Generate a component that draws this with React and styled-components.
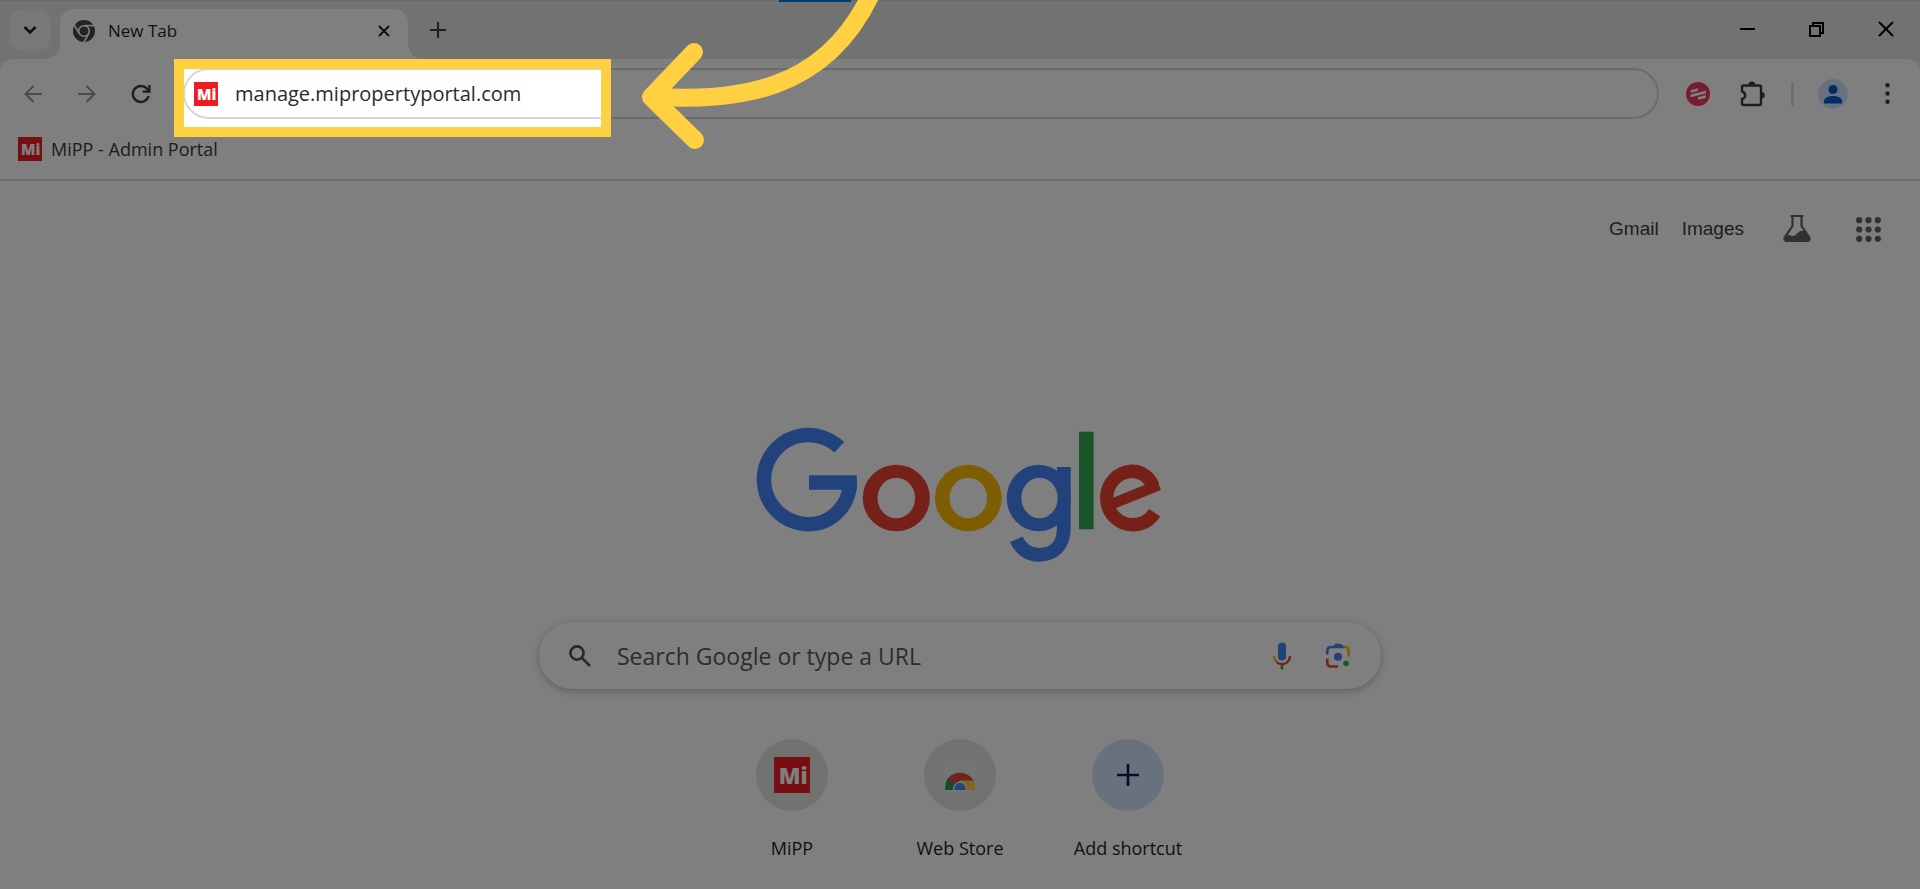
import React from 'react';
import styled, { createGlobalStyle } from 'styled-components';

const GlobalStyle = createGlobalStyle`
  * {
    box-sizing: border-box;
  }
  body {
    margin: 0;
    background: #fff;
    font-family: 'Open Sans', 'Noto Sans', sans-serif;
    color: #1f1f1f;
  }
  button {
    border: none;
    background: none;
    padding: 0;
    font: inherit;
    color: inherit;
    cursor: pointer;
  }
  svg {
    display: block;
  }
`

const Window = styled.div`
  position: relative;
  display: flex;
  flex-direction: column;
  min-height: 100vh;
  overflow: hidden;
`

const TabStrip = styled.div`
  display: flex;
  height: 59px;
  padding: 8px 0 0 9px;
  background: #e5e5e5;
  border-top: 1px solid #d4d4d4;
`

const TabSearch = styled.button`
  display: flex;
  align-items: center;
  justify-content: center;
  width: 42px;
  height: 42px;
  margin-right: 9px;
  border-radius: 14px;
  background: #f1f1f1;
`

const Tab = styled.div`
  position: relative;
  display: flex;
  align-items: center;
  width: 348px;
  height: 50px;
  padding: 0 14px 7px 13px;
  border-radius: 14px 14px 0 0;
  background: #fff;
  font-size: 17px;
  line-height: 24px;
  &::before,
  &::after {
    content: '';
    position: absolute;
    bottom: 0;
    width: 15px;
    height: 15px;
  }
  &::before {
    right: 100%;
    background: radial-gradient(circle at 0 0, transparent 15px, #fff 15px);
  }
  &::after {
    left: 100%;
    background: radial-gradient(circle at 100% 0, transparent 15px, #fff 15px);
  }
`

const TabTitle = styled.span`
  flex: 1;
  margin-left: 13px;
  font-weight: 500;
`

const TabButton = styled.button`
  display: flex;
  align-items: center;
  justify-content: center;
  width: 20px;
  height: 20px;
`

const NewTab = styled(TabButton)`
  width: 42px;
  height: 42px;
  margin-left: 9px;
`

const WindowControls = styled.div`
  display: flex;
  height: 40px;
  margin-left: auto;
`

const WindowButton = styled.button`
  display: flex;
  align-items: center;
  justify-content: center;
  width: 69px;
`

const TopMarker = styled.div`
  position: absolute;
  top: 0;
  left: 779px;
  width: 72px;
  height: 2px;
  background: #0078d4;
`

const ToolbarBack = styled.div`
  background: #e5e5e5;
`

const Toolbar = styled.div`
  display: flex;
  align-items: center;
  gap: 18px;
  padding: 9px 15px 0;
  border-radius: 13px 13px 0 0;
  background: #fff;
`

const ToolButton = styled.button`
  display: flex;
  align-items: center;
  justify-content: center;
  width: 36px;
  height: 36px;
`

const Omnibox = styled.div`
  position: relative;
  flex: 1;
  display: flex;
  align-items: center;
  height: 51px;
  margin: 0 3px 0 6px;
  padding: 0 9px;
  border: 2px solid #d6d7d9;
  border-radius: 26px;
`

const Address = styled.input`
  flex: 1;
  min-width: 0;
  height: 40px;
  margin-left: 17px;
  padding: 0;
  border: none;
  outline: none;
  background: none;
  font: 20px/28px 'Open Sans', 'Noto Sans', sans-serif;
  color: #2b2b2b;
`

const Separator = styled.span`
  width: 3px;
  height: 24px;
  margin: 0 3px;
  border-radius: 2px;
  background: #dcdcdc;
`

/* everything outside the frame is dimmed by its spread shadow */
const Spotlight = styled.div`
  position: absolute;
  z-index: 5;
  top: -11px;
  left: -11px;
  width: 437px;
  height: 78px;
  border: 10px solid #ffd042;
  box-shadow: 0 0 0 9999px rgba(0, 0, 0, 0.5);
  pointer-events: none;
`

const ArrowDrawing = styled.svg`
  position: absolute;
  z-index: 6;
  top: -70px;
  left: 455px;
  pointer-events: none;
`

const Bookmarks = styled.nav`
  display: flex;
  align-items: center;
  height: 62px;
  padding: 0 18px;
  border-bottom: 2px solid #dadada;
`

const Bookmark = styled.a`
  display: flex;
  align-items: center;
  gap: 9px;
  font-size: 18px;
  line-height: 24px;
  font-weight: 500;
  color: #3a3a3a;
  text-decoration: none;
`

const Page = styled.main`
  display: flex;
  flex-direction: column;
  align-items: center;
`

const PageNav = styled.nav`
  align-self: stretch;
  display: flex;
  align-items: center;
  justify-content: flex-end;
  height: 60px;
  margin-top: 18px;
  padding-right: 22px;
`

const NavLink = styled.a`
  margin-right: 23px;
  font: 19px/28px 'Liberation Sans', Arial, sans-serif;
  color: #3c3c3c;
  text-decoration: none;
`

const NavButton = styled.button`
  display: flex;
  align-items: center;
  justify-content: center;
  width: 60px;
  height: 60px;
  & + & {
    margin-left: 11px;
  }
`

const Logo = styled.svg`
  margin-top: 151px;
`

const SearchBox = styled.form`
  display: flex;
  align-items: center;
  width: 842px;
  max-width: 100%;
  height: 67px;
  margin-top: 42px;
  padding: 0 27px 0 30px;
  border-radius: 34px;
  background: #fff;
  box-shadow: 0 2px 9px rgba(32, 33, 36, 0.3);
`

const SearchInput = styled.input`
  flex: 1;
  min-width: 0;
  height: 48px;
  margin: 0 16px 0 26px;
  padding: 0;
  border: none;
  outline: none;
  background: none;
  font: 23px/32px 'Open Sans', 'Noto Sans', sans-serif;
  &::placeholder {
    color: #5a5a5a;
    opacity: 1;
  }
`

const SearchButton = styled.button`
  display: flex;
  align-items: center;
  justify-content: center;
  width: 32px;
  height: 32px;
  & + & {
    margin-left: 24px;
  }
`

const Shortcuts = styled.div`
  display: flex;
  margin-top: 50px;
`

const Shortcut = styled.a`
  display: flex;
  flex-direction: column;
  align-items: center;
  gap: 23px;
  width: 168px;
  font-size: 18px;
  line-height: 28px;
  color: #1f1f1f;
  text-decoration: none;
`

const Tile = styled.span`
  display: flex;
  align-items: center;
  justify-content: center;
  width: 72px;
  height: 72px;
  border-radius: 50%;
  background: ${props => props.$tint || '#e4e4e0'};
`

const MiIcon = ({ size }) => (
  <svg width={size} height={size} viewBox="0 0 24 24" aria-hidden="true">
    <rect width="24" height="24" fill="#ed1c24" />
    <text x="12.8" y="18" textAnchor="middle" fontFamily="Open Sans, sans-serif" fontWeight="800" fontSize="15" fill="#fff">Mi</text>
  </svg>
)

const ChromeIcon = () => (
  <svg width="22" height="22" viewBox="0 0 22 22" aria-hidden="true">
    <circle cx="11" cy="11" r="11" fill="#43474b" />
    <g stroke="#fff" strokeWidth="1.6" fill="none">
      <path d="M11 5.6H21" />
      <path d="M6.3 13.7L1.3 5" />
      <path d="M15.7 13.7L10.7 22.4" />
      <circle cx="11" cy="11" r="5.3" />
    </g>
  </svg>
)

const GoogleLogo = () => (
  <Logo width="440" height="170" viewBox="0 0 440 170" role="img" aria-label="Google">
    <g fill="none" stroke="#4285f4" strokeWidth="14.4">
      <path d="M99.3 37.3A44.6 44.6 0 1 0 69 114.2A40.8 42 0 0 0 109.8 72" />
      <path d="M69 72.5H116.8" />
    </g>
    <ellipse cx="156.3" cy="88" rx="33.6" ry="33.3" fill="#ea4335" />
    <ellipse cx="156.3" cy="88" rx="18.8" ry="20.3" fill="#fff" />
    <ellipse cx="228.3" cy="88" rx="33.4" ry="33.3" fill="#fbbc05" />
    <ellipse cx="228.3" cy="88" rx="18.8" ry="20.3" fill="#fff" />
    <ellipse cx="298.7" cy="88" rx="32" ry="33.3" fill="#4285f4" />
    <path d="M323.8 57V118C323.8 135 314 144.8 299 144.8C288 144.8 280 138 276.3 129.3" fill="none" stroke="#4285f4" strokeWidth="13.8" />
    <ellipse cx="299.5" cy="88" rx="18.2" ry="20.3" fill="#fff" />
    <rect x="339" y="21.7" width="14.6" height="97.6" fill="#34a853" />
    <g fill="none" stroke="#ea4335">
      <path d="M414.7 102.8C409.5 110.5 402.5 114.8 392.7 114.8A26 26.8 0 0 1 366.7 88A26 26.8 0 0 1 391.5 61.2C402 61.2 409.5 67.5 413 76" strokeWidth="13.4" />
      <path d="M372.5 93.7L419 75" strokeWidth="10.8" />
    </g>
  </Logo>
)

const Arrow = () => (
  <ArrowDrawing width="250" height="160" viewBox="640 0 250 160" aria-hidden="true">
    <g fill="none" stroke="#ffd042" strokeWidth="18" strokeLinecap="round" strokeLinejoin="round">
      <path d="M872 -8C825 94 735 101 652 97" />
      <path d="M694 52L651 97L695 140" />
    </g>
  </ArrowDrawing>
)

const App = () => (
  <Window>
    <GlobalStyle />
    <TabStrip>
      <TabSearch aria-label="Search tabs">
        <svg width="14" height="10" viewBox="0 0 14 10" fill="none" stroke="#1f1f1f" strokeWidth="2.6">
          <path d="M1.5 2L7 7.5L12.5 2" />
        </svg>
      </TabSearch>
      <Tab>
        <ChromeIcon />
        <TabTitle>New Tab</TabTitle>
        <TabButton aria-label="Close tab">
          <svg width="12" height="12" viewBox="0 0 12 12" stroke="#1f1f1f" strokeWidth="2">
            <path d="M1 1L11 11M11 1L1 11" />
          </svg>
        </TabButton>
      </Tab>
      <NewTab aria-label="New tab">
        <svg width="16" height="16" viewBox="0 0 16 16" stroke="#3c3c3c" strokeWidth="2">
          <path d="M8 0V16M0 8H16" />
        </svg>
      </NewTab>
      <WindowControls>
        <WindowButton aria-label="Minimize">
          <svg width="15" height="15" viewBox="0 0 15 15"><rect y="6" width="15" height="2" /></svg>
        </WindowButton>
        <WindowButton aria-label="Restore">
          <svg width="15" height="15" viewBox="0 0 15 15" fill="none" stroke="#000" strokeWidth="2">
            <path d="M1 4H11V14H1ZM4 4V1H14V11H11" />
          </svg>
        </WindowButton>
        <WindowButton aria-label="Close">
          <svg width="16" height="16" viewBox="0 0 16 16" stroke="#000" strokeWidth="2">
            <path d="M1 1L15 15M15 1L1 15" />
          </svg>
        </WindowButton>
      </WindowControls>
      <TopMarker />
    </TabStrip>

    <ToolbarBack>
      <Toolbar>
        <ToolButton aria-label="Back">
          <svg width="18" height="18" viewBox="0 0 18 18" fill="none" stroke="#949494" strokeWidth="2">
            <path d="M18 9H2M9.5 1L1.5 9L9.5 17" />
          </svg>
        </ToolButton>
        <ToolButton aria-label="Forward">
          <svg width="18" height="18" viewBox="0 0 18 18" fill="none" stroke="#949494" strokeWidth="2">
            <path d="M0 9H16M8.5 1L16.5 9L8.5 17" />
          </svg>
        </ToolButton>
        <ToolButton aria-label="Reload">
          <svg width="20" height="20" viewBox="0 0 20 20" fill="none" stroke="#3c3c3c" strokeWidth="2.4">
            <path d="M17.6 12A8 8 0 1 1 16 4.8L18 7" />
            <path d="M18.4 1V7.6H11.6" />
          </svg>
        </ToolButton>
        <Omnibox>
          <MiIcon size={24} />
          <Address type="text" aria-label="Address" defaultValue="manage.mipropertyportal.com" />
          <Spotlight />
          <Arrow />
        </Omnibox>
        <ToolButton aria-label="Recorder extension">
          <svg width="24" height="24" viewBox="0 0 24 24">
            <circle cx="12" cy="12" r="12" fill="#ee365f" />
            <g fill="#fff">
              <path d="M4.6 8.2L12 6.2V9L4.6 10.8Z" />
              <path d="M4.6 12.6L19.8 8.8V11.4L4.6 15.2Z" />
              <path d="M12 15L19.8 13.2V16L12 17.8Z" />
            </g>
          </svg>
        </ToolButton>
        <ToolButton aria-label="Extensions">
          <svg width="25" height="26" viewBox="0 0 25 26">
            <path d="M3.5 4.5H19.5Q21 4.5 21 6V22.5Q21 24 19.5 24H3.5Q2 24 2 22.5V18.2Q5.2 17 5.2 14.2Q5.2 11.5 2 10.3V6Q2 4.5 3.5 4.5Z" fill="none" stroke="#3c3c3c" strokeWidth="2.4" />
            <path d="M8.5 4A3.4 3.4 0 0 1 15.3 4ZM21.5 11A3.2 3.2 0 0 1 21.5 17.4Z" fill="#3c3c3c" />
          </svg>
        </ToolButton>
        <Separator />
        <ToolButton aria-label="Profile">
          <svg width="30" height="30" viewBox="0 0 30 30">
            <circle cx="15" cy="15" r="15" fill="#d3e3fd" />
            <circle cx="15" cy="10.5" r="4.6" fill="#0b57d0" />
            <path d="M6 24.5V21.8C6 18.6 11 17 15 17S24 18.6 24 21.8V24.5Z" fill="#0b57d0" />
          </svg>
        </ToolButton>
        <ToolButton aria-label="Menu">
          <svg width="5" height="21" viewBox="0 0 5 21" fill="#3c3c3c">
            <circle cx="2.5" cy="2.3" r="2.2" />
            <circle cx="2.5" cy="10.5" r="2.2" />
            <circle cx="2.5" cy="18.7" r="2.2" />
          </svg>
        </ToolButton>
      </Toolbar>
    </ToolbarBack>

    <Bookmarks>
      <Bookmark href="#"><MiIcon size={24} />MiPP - Admin Portal</Bookmark>
    </Bookmarks>

    <Page>
      <PageNav>
        <NavLink href="#">Gmail</NavLink>
        <NavLink href="#">Images</NavLink>
        <NavButton aria-label="Search Labs">
          <svg width="28" height="28" viewBox="0 0 28 28">
            <path d="M9.5 1.5V11L1.6 22.6Q0.8 25.2 3.2 25.8H24.8Q27.2 25.2 26.4 22.6L18.5 11V1.5" fill="none" stroke="#5f6368" strokeWidth="2.2" />
            <path d="M7.5 1H20.5" stroke="#5f6368" strokeWidth="2" />
            <path d="M2 22L6 19.5C10 22.5 12.5 20.5 14.5 18C16.5 16 19 15.5 21.5 16L26.4 23V26.4H2Z" fill="#5f6368" />
          </svg>
        </NavButton>
        <NavButton aria-label="Google apps">
          <svg width="25" height="25" viewBox="0 0 25 25" fill="#5f6368">
            {[3.2, 12.5, 21.8].map(y => [3.2, 12.5, 21.8].map(x => (
              <circle key={x + '-' + y} cx={x} cy={y} r="3.1" />
            )))}
          </svg>
        </NavButton>
      </PageNav>

      <GoogleLogo />

      <SearchBox onSubmit={e => e.preventDefault()}>
        <svg width="22" height="22" viewBox="0 0 22 22" fill="none" stroke="#4d5156" strokeWidth="2.6" aria-hidden="true">
          <circle cx="8" cy="8" r="6.6" />
          <path d="M12.6 12.6L21 21" />
        </svg>
        <SearchInput type="text" aria-label="Search" placeholder="Search Google or type a URL" />
        <SearchButton type="button" aria-label="Search by voice">
          <svg width="20" height="28" viewBox="0 0 20 28" fill="none" strokeWidth="2.2">
            <rect x="6" y="0.5" width="8" height="18" rx="4" fill="#4285f4" />
            <path d="M10 22V27.5" stroke="#34a853" strokeWidth="2.6" />
            <path d="M2 14C2 16.8 3.2 19 5 20.4" stroke="#fbbc04" />
            <path d="M4.6 20.1C8 22.8 12 22.8 15.4 20.1C17 18.7 18 16.6 18 14" stroke="#ea4335" />
          </svg>
        </SearchButton>
        <SearchButton type="button" aria-label="Search by image">
          <svg width="24" height="25" viewBox="0 0 24 25" fill="none" strokeWidth="2.6">
            <path d="M1.3 11.5V8Q1.3 4 5.3 4H18" stroke="#4285f4" />
            <path d="M7.5 3.6L9 0.8H15L17 3.6Z" fill="#4285f4" />
            <path d="M17.5 4H18.7Q22.7 4 22.7 8V13.5" stroke="#fbbc04" />
            <path d="M1.3 15.5V19.5Q1.3 23.5 5.3 23.5H12" stroke="#ea4335" />
            <circle cx="12" cy="13.8" r="4" fill="#4285f4" />
            <circle cx="20" cy="20.5" r="2.8" fill="#34a853" />
          </svg>
        </SearchButton>
      </SearchBox>

      <Shortcuts>
        <Shortcut href="#">
          <Tile><MiIcon size={36} /></Tile>
          MiPP
        </Shortcut>
        <Shortcut href="#">
          <Tile>
            <svg width="34" height="34" viewBox="0 0 34 34" aria-hidden="true">
              <rect x="1" y="3" width="32" height="31" fill="#e8e8e8" />
              <path d="M2 32Q2 22.5 6 19L12.5 27V32Z" fill="#1e9e58" />
              <path d="M4.8 20.8C7.5 16.8 12 14.8 17 14.8S28 17.5 30.5 22.8H17L11.5 27.5Z" fill="#dd4b3e" />
              <path d="M17 22.8H30.6Q32 26 32 32H21.5Z" fill="#ffcd41" />
              <path d="M9.8 32C9.8 27 12.8 23.4 17 23.4S24.2 27 24.2 32Z" fill="#e8e8e8" />
              <path d="M11.4 32C11.4 27.5 13.6 25 17 25S22.6 27.5 22.6 32Z" fill="#4a8af4" />
            </svg>
          </Tile>
          Web Store
        </Shortcut>
        <Shortcut href="#">
          <Tile $tint="#d3e3fd">
            <svg width="22" height="22" viewBox="0 0 22 22" stroke="#041e49" strokeWidth="2.6" aria-hidden="true">
              <path d="M11 0V22M0 11H22" />
            </svg>
          </Tile>
          Add shortcut
        </Shortcut>
      </Shortcuts>
    </Page>
  </Window>
)

export default App
